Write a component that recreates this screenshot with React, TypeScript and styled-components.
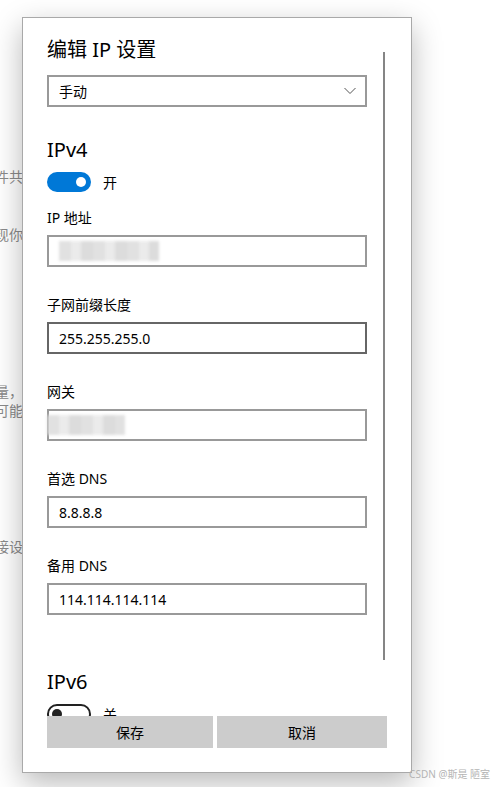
import React from "react";
import styled, { createGlobalStyle } from "styled-components";

const Global = createGlobalStyle`
  html, body {
    margin: 0;
    padding: 0;
    background: #fff;
  }
  body {
    font-family: "Noto Sans", "Noto Sans CJK SC", sans-serif;
    color: #000;
  }
`;

const Page = styled.div`
  position: relative;
  width: 494px;
  height: 787px;
  overflow: hidden;
  background: #fff;
`;

// 被对话框挡住的设置页文字，只剩左边露出的一点
const Behind = styled.div`
  display: flex;
  flex-direction: column;
  margin-left: -5px;
`;

const BehindLine = styled.div<{ $top: number }>`
  margin-top: ${(p) => p.$top}px;
  height: 18px;
  line-height: 18px;
  font-size: 14px;
  color: #8a8a8a;
  white-space: nowrap;
  font-family: "Noto Sans CJK SC", sans-serif;
`;

const Dialog = styled.div`
  position: absolute;
  left: 22px;
  top: 17px;
  width: 388px;
  height: 754px;
  background: #fff;
  border: 1px solid #a9a9a9;
  box-shadow: 0 10px 28px rgba(0, 0, 0, 0.28);
  display: flex;
  flex-direction: column;
`;

const Body = styled.div`
  display: flex;
  height: 698px;
  flex-shrink: 0;
  overflow: hidden;
`;

const Content = styled.div`
  width: 320px;
  margin-left: 24px;
  display: flex;
  flex-direction: column;

  & > * {
    flex-shrink: 0;
  }
`;

const ScrollThumb = styled.div`
  width: 2px;
  height: 608px;
  margin-top: 34px;
  margin-left: 16px;
  background: #858585;
`;

const Title = styled.div<{ $top: number }>`
  margin-top: ${(p) => p.$top}px;
  font-size: 20px;
  line-height: 28px;
  height: 28px;
  white-space: nowrap;
`;

const Select = styled.div`
  margin-top: 11px;
  height: 28px;
  border: 2px solid #999;
  display: flex;
  align-items: center;
  justify-content: space-between;
  padding: 0 9px 0 10px;
  font-size: 14px;
  font-family: "Noto Sans CJK SC", sans-serif;
`;

const Toggle = styled.div<{ $on: boolean }>`
  width: 44px;
  height: 20px;
  box-sizing: border-box;
  border-radius: 10px;
  background: ${(p) => (p.$on ? "#0078d7" : "#fff")};
  border: ${(p) => (p.$on ? "none" : "2px solid #222")};
  display: flex;
  align-items: center;
  justify-content: ${(p) => (p.$on ? "flex-end" : "flex-start")};
  padding: 0 ${(p) => (p.$on ? "5px" : "3px")};
`;

const Knob = styled.div<{ $on: boolean }>`
  width: 10px;
  height: 10px;
  border-radius: 50%;
  background: ${(p) => (p.$on ? "#fff" : "#222")};
`;

const ToggleRow = styled.div`
  margin-top: 8px;
  display: flex;
  align-items: center;
  gap: 12px;
  height: 20px;
  font-size: 14px;
  font-family: "Noto Sans CJK SC", sans-serif;
`;

const Label = styled.div<{ $top: number }>`
  margin-top: ${(p) => p.$top}px;
  height: 20px;
  line-height: 20px;
  font-size: 14px;
  white-space: nowrap;
`;

const Field = styled.div<{ $focus?: boolean }>`
  margin-top: 7px;
  height: 28px;
  border: 2px solid ${(p) => (p.$focus ? "#666" : "#999")};
  display: flex;
  align-items: center;
  padding-left: 10px;
  font-size: 14px;
  position: relative;
`;

// 打码的 IP
const Redacted = styled.div<{ $w: number; $left: number }>`
  position: absolute;
  left: ${(p) => p.$left}px;
  top: 4px;
  width: ${(p) => p.$w}px;
  height: 20px;
  background: repeating-linear-gradient(
    90deg,
    #dcdcdc 0 12px,
    #e8e8e8 12px 22px,
    #d6d6d6 22px 34px
  );
  filter: blur(1.5px);
  opacity: 0.85;
`;

const Footer = styled.div`
  display: flex;
  gap: 4px;
  padding-left: 24px;
`;

const Button = styled.button<{ $w: number }>`
  width: ${(p) => p.$w}px;
  height: 32px;
  border: none;
  background: #cccccc;
  font-size: 14px;
  color: #000;
  font-family: "Noto Sans CJK SC", sans-serif;
  padding: 0;
`;

const Watermark = styled.div`
  position: absolute;
  right: 4px;
  bottom: 6px;
  font-size: 10px;
  color: #b4b4b4;
  font-family: "Noto Sans", "Noto Sans CJK SC", sans-serif;
`;

const Chevron = () => (
  <svg width="12" height="8" viewBox="0 0 12 8">
    <path d="M0.5 1 L6 6.5 L11.5 1" fill="none" stroke="#555" strokeWidth="1" />
  </svg>
);

export default function App() {
  return (
    <Page>
      <Global />
      <Behind>
        <BehindLine $top={167}>件共</BehindLine>
        <BehindLine $top={40}>现你</BehindLine>
        <BehindLine $top={139}>量，</BehindLine>
        <BehindLine $top={1}>可能</BehindLine>
        <BehindLine $top={118}>接设</BehindLine>
      </Behind>

      <Dialog>
        <Body>
          <Content>
            <Title $top={18}>编辑 IP 设置</Title>
            <Select>
              <span>手动</span>
              <Chevron />
            </Select>

            <Title $top={29}>IPv4</Title>
            <ToggleRow>
              <Toggle $on>
                <Knob $on />
              </Toggle>
              开
            </ToggleRow>

            <Label $top={16}>IP 地址</Label>
            <Field>
              <Redacted $left={10} $w={100} />
            </Field>

            <Label $top={28}>子网前缀长度</Label>
            <Field $focus>255.255.255.0</Field>

            <Label $top={28}>网关</Label>
            <Field>
              <Redacted $left={-2} $w={78} />
            </Field>

            <Label $top={28}>首选 DNS</Label>
            <Field>8.8.8.8</Field>

            <Label $top={28}>备用 DNS</Label>
            <Field>114.114.114.114</Field>

            <Title $top={53}>IPv6</Title>
            <ToggleRow>
              <Toggle $on={false}>
                <Knob $on={false} />
              </Toggle>
              关
            </ToggleRow>
          </Content>
          <ScrollThumb />
        </Body>
        <Footer>
          <Button $w={166}>保存</Button>
          <Button $w={170}>取消</Button>
        </Footer>
      </Dialog>

      <Watermark>CSDN @斯是 陋室</Watermark>
    </Page>
  );
}
